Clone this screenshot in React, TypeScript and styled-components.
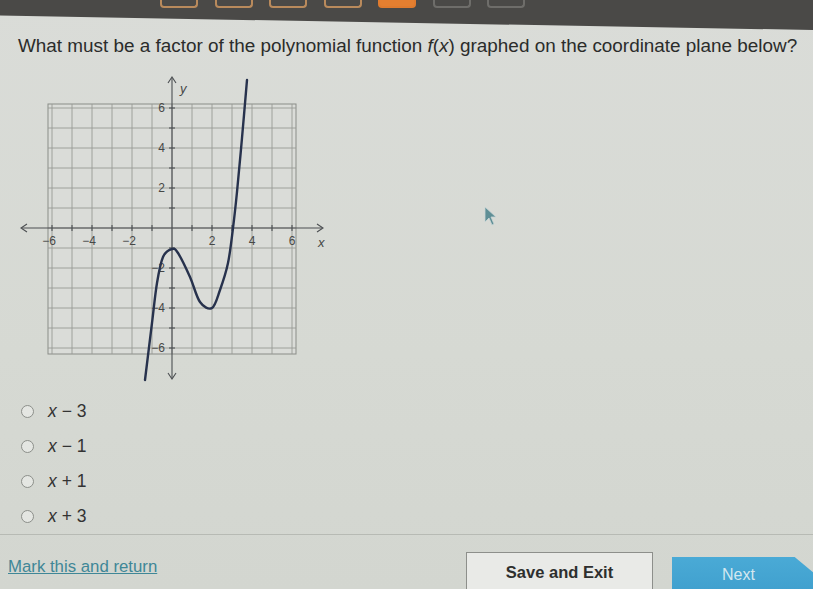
import React from 'react'
import styled, { createGlobalStyle } from 'styled-components'

const GlobalStyle = createGlobalStyle`
  html, body {
    margin: 0;
    padding: 0;
    background: #d7dad5;
    overflow: hidden;
  }
  body {
    font-family: "Liberation Sans", Arial, sans-serif;
    color: #2b2c2b;
  }
`

const Page = styled.div`
  position: relative;
  width: 813px;
  height: 589px;
  background: linear-gradient(180deg, #dadcd8 0%, #d6d9d3 60%, #d3d6d0 100%);
  overflow: hidden;
`

const Header = styled.header`
  height: 30px;
  background: #4a4947;
  clip-path: polygon(0 0, 100% 0, 100% 100%, 0 52%);
  display: flex;
  align-items: flex-start;
  gap: 16.5px;
  padding-left: 160px;
`

const Tab = styled.div<{ $state: 'done' | 'current' | 'todo' }>`
  width: 38px;
  height: 8px;
  box-sizing: border-box;
  border: 2px solid ${p => (p.$state === 'done' ? '#b98a5c' : p.$state === 'current' ? '#e07b2e' : '#6e6d6a')};
  border-top: none;
  border-radius: 0 0 4px 4px;
  background: ${p => (p.$state === 'current' ? '#e57f30' : '#4a4947')};
`

const Question = styled.p`
  margin: 5px 0 0;
  padding-left: 18px;
  font-size: 18.9px;
  line-height: 21px;
  white-space: nowrap;
`

const Graph = styled.svg`
  display: block;
  margin-top: 16px;
  margin-left: 15px;
`

const Options = styled.div`
  margin-top: 7px;
  display: flex;
  flex-direction: column;
`

const Option = styled.label`
  height: 35px;
  display: flex;
  align-items: center;
  gap: 14px;
  padding-left: 21px;
  font-size: 17.5px;
  color: #333;
`

const Radio = styled.span`
  width: 13px;
  height: 13px;
  box-sizing: border-box;
  border-radius: 50%;
  border: 1.5px solid #8c8f8a;
  background: #e4e6e2;
`

const Var = styled.i`
  font-family: "Liberation Sans", Arial, sans-serif;
`

const Footer = styled.footer`
  border-top: 1px solid #b7bab4;
  display: flex;
  align-items: flex-start;
  height: 60px;
`

const MarkLink = styled.a`
  margin: 23px 0 0 8px;
  font-size: 16.8px;
  line-height: 18px;
  color: #3f8797;
  text-decoration: underline;
  cursor: pointer;
`

const SaveButton = styled.button`
  margin: 17px 0 0 auto;
  width: 187px;
  height: 40px;
  box-sizing: border-box;
  border: 1px solid #8d8f8b;
  background: #e9eae7;
  font-family: "Liberation Sans", Arial, sans-serif;
  font-size: 16.5px;
  font-weight: bold;
  color: #2e2f2e;
  padding-bottom: 0;
`

const NextButton = styled.button`
  margin: 22px 0 0 19px;
  width: 141px;
  height: 38px;
  border: none;
  background: linear-gradient(180deg, #4aaad6 0%, #3f9fcd 100%);
  clip-path: polygon(0 0, 87% 0, 100% 40%, 100% 100%, 0 100%);
  font-family: "Liberation Sans", Arial, sans-serif;
  font-size: 16px;
  color: #d3e8f0;
  padding: 0 8px 2px 0;
`

const Cursor = styled.svg`
  position: absolute;
  left: 484px;
  top: 206px;
`

// graph data, in graph units
const curvePts: [number, number][] = [
  [-1.35, -7.6], [-1, -4.75], [-0.75, -2.75], [-0.45, -1.45], [0, -1.05],
  [0.3, -1.25], [0.9, -2.45], [1.4, -3.7], [2, -4.0], [2.4, -3.1],
  [2.8, -1.75], [3.05, 0], [3.25, 1.8], [3.5, 4.5], [3.75, 7.4],
]

const OX = 172
const OY = 228
const U = 20
const px = (x: number) => OX + x * U
const py = (y: number) => OY - y * U

function smoothPath(pts: [number, number][]) {
  const p = pts.map(([x, y]) => [px(x), py(y)])
  let d = `M${p[0][0]},${p[0][1]}`
  for (let i = 0; i < p.length - 1; i++) {
    const p0 = p[i - 1] || p[i]
    const p1 = p[i]
    const p2 = p[i + 1]
    const p3 = p[i + 2] || p2
    const c1x = p1[0] + (p2[0] - p0[0]) / 6
    const c1y = p1[1] + (p2[1] - p0[1]) / 6
    const c2x = p2[0] - (p3[0] - p1[0]) / 6
    const c2y = p2[1] - (p3[1] - p1[1]) / 6
    d += ` C${c1x},${c1y} ${c2x},${c2y} ${p2[0]},${p2[1]}`
  }
  return d
}

const units = [-6, -5, -4, -3, -2, -1, 0, 1, 2, 3, 4, 5, 6]
const xLabels = [-6, -4, -2, 2, 4, 6]
const yLabels = [6, 4, 2, -2, -4, -6]

const CoordinatePlane = () => (
  <Graph width={310} height={315} viewBox="15 72 310 315">
    <rect x={48} y={104} width={248} height={250} fill="#dadcd8" stroke="#8a8d88" strokeWidth={1} />
    {units.map(k => (
      <g key={k} stroke="#979a95" strokeWidth={0.9}>
        <line x1={px(k)} y1={104} x2={px(k)} y2={354} />
        <line x1={48} y1={py(k)} x2={296} y2={py(k)} />
      </g>
    ))}
    {/* axes */}
    <g stroke="#4c4f52" strokeWidth={1.1} fill="none">
      <line x1={22} y1={OY} x2={322} y2={OY} />
      <line x1={OX} y1={78} x2={OX} y2={378} />
      <polyline points="27,224 21,228 27,232" />
      <polyline points="317,224 323,228 317,232" />
      <polyline points="168,83 172,77 176,83" />
      <polyline points="168,373 172,379 176,373" />
      {units.filter(k => k !== 0).map(k => (
        <g key={k}>
          <line x1={px(k)} y1={OY - 3} x2={px(k)} y2={OY + 3} />
          <line x1={OX - 3} y1={py(k)} x2={OX + 3} y2={py(k)} />
        </g>
      ))}
    </g>
    <g fontFamily="Liberation Sans, Arial, sans-serif" fontSize={12} fill="#464846">
      {xLabels.map(k => (
        <text key={k} x={px(k) - (k < 0 ? 3 : 0)} y={OY + 17} textAnchor="middle">
          {k < 0 ? `\u2212${-k}` : k}
        </text>
      ))}
      {yLabels.map(k => (
        <text key={k} x={OX - 7} y={py(k) + 4} textAnchor="end">
          {k < 0 ? `\u2212${-k}` : k}
        </text>
      ))}
      <text x={318} y={OY + 19} fontStyle="italic" fontSize={13}>x</text>
      <text x={180} y={93} fontStyle="italic" fontSize={13}>y</text>
    </g>
    <path d={smoothPath(curvePts)} fill="none" stroke="#27324d" strokeWidth={2.4} strokeLinecap="round" />
  </Graph>
)

const answers = [
  { op: '\u2212', n: 3 },
  { op: '\u2212', n: 1 },
  { op: '+', n: 1 },
  { op: '+', n: 3 },
]

const tabs: ('done' | 'current' | 'todo')[] = ['done', 'done', 'done', 'done', 'current', 'todo', 'todo']

export default function App() {
  return (
    <Page>
      <GlobalStyle />
      <Header>
        {tabs.map((s, i) => (
          <Tab key={i} $state={s} />
        ))}
      </Header>
      <Question>
        What must be a factor of the polynomial function <Var>f</Var>(<Var>x</Var>) graphed on the coordinate plane below?
      </Question>
      <CoordinatePlane />
      <Options>
        {answers.map((a, i) => (
          <Option key={i}>
            <Radio />
            <span>
              <Var>x</Var> {a.op} {a.n}
            </span>
          </Option>
        ))}
      </Options>
      <Footer>
        <MarkLink>Mark this and return</MarkLink>
        <SaveButton>Save and Exit</SaveButton>
        <NextButton>Next</NextButton>
      </Footer>
      <Cursor width={14} height={20} viewBox="0 0 14 20">
        <path d="M1,1 L1,16 L5,12 L8,19 L10,18 L7,11 L12,11 Z" fill="#5f8f96" stroke="#c9d6d6" strokeWidth={0.8} />
      </Cursor>
    </Page>
  )
}
